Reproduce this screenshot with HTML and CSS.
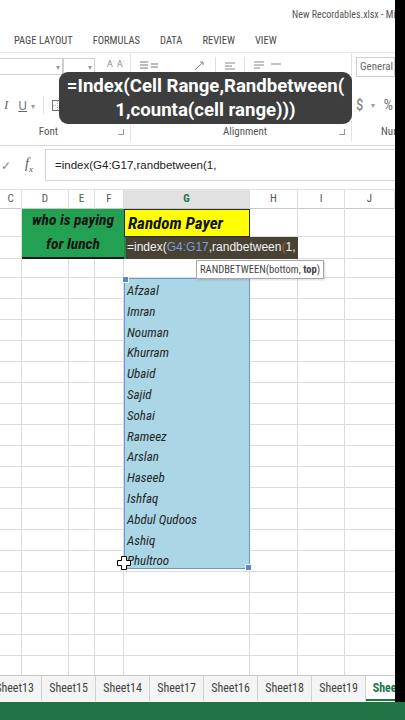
FILE: index.html
```html
<!DOCTYPE html>
<html lang="en">
<head>
    <meta charset="UTF-8">
    <meta name="viewport" content="width=device-width, initial-scale=1.0">
    <title>New Recordables.xlsx</title>
    <link rel="stylesheet" href="styles.css">
</head>
<body>
<div class="screen">
    <div class="main">
        <div class="app">
            <div class="titlebar">New Recordables.xlsx - Microsoft Excel</div>

            <div class="menu-tabs">
                <span>PAGE LAYOUT</span>
                <span>FORMULAS</span>
                <span>DATA</span>
                <span>REVIEW</span>
                <span>VIEW</span>
            </div>

            <!-- ribbon -->
            <div class="ribbon">
                <div class="group font-group">
                    <div class="ctl-row">
                        <span class="combo combo-name"><span class="caret">▾</span></span>
                        <span class="combo combo-size"><span class="caret">▾</span></span>
                        <span class="grow">A<small>˄</small> A<small>˅</small></span>
                    </div>
                    <div class="ctl-row row-low">
                        <span class="btn-i">I</span>
                        <span class="btn-u">U</span>
                        <span class="caret">▾</span>
                        <span class="vsep"></span>
                        <svg class="ico" width="11" height="11" viewBox="0 0 11 11"><rect x="0.5" y="0.5" width="10" height="10" fill="#fff" stroke="#777"/><path d="M5.5 1v9M1 5.5h9" stroke="#aaa" stroke-dasharray="1 1"/></svg>
                    </div>
                    <div class="glabel">Font<span class="launcher"></span></div>
                </div>

                <div class="group align-group">
                    <div class="ctl-row">
                        <svg class="ico" width="20" height="10" viewBox="0 0 20 10"><path d="M1 1h8M1 4h8M1 7h8M12 3h7M12 6h7" stroke="#777"/></svg>
                        <svg class="ico gap-l" width="14" height="12" viewBox="0 0 14 12"><path d="M2 10l8-8M7 2h3v3" stroke="#888" fill="none"/></svg>
                        <span class="vsep"></span>
                        <svg class="ico" width="12" height="10" viewBox="0 0 12 10"><path d="M1 2h10M1 5h7M1 8h10" stroke="#888"/></svg>
                        <span class="vsep"></span>
                        <svg class="ico" width="30" height="10" viewBox="0 0 30 10"><path d="M1 1h10M1 4h10M1 7h6M18 3h10" stroke="#888"/></svg>
                    </div>
                    <div class="ctl-row row-low"></div>
                    <div class="glabel">Alignment<span class="launcher"></span></div>
                </div>

                <div class="group num-group">
                    <div class="ctl-row">
                        <span class="combo combo-general">General</span>
                    </div>
                    <div class="ctl-row row-low num-btns">
                        <span>$</span>
                        <span class="caret">▾</span>
                        <span>%</span>
                    </div>
                    <div class="glabel">Number</div>
                </div>
            </div>

            <!-- formula bar -->
            <div class="fbar">
                <div class="fbar-icons">
                    <span class="tick">✓</span>
                    <span class="fx">f<sub>x</sub></span>
                </div>
                <div class="fbox">=index(G4:G17,randbetween(1,</div>
            </div>

            <!-- column headers -->
            <div class="colhead">
                <span>C</span>
                <span>D</span>
                <span>E</span>
                <span>F</span>
                <span class="active">G</span>
                <span>H</span>
                <span>I</span>
                <span>J</span>
            </div>

            <!-- worksheet body -->
            <div class="sheet">
                <div class="cell-title">
                    <span>who is paying</span>
                    <span>for lunch</span>
                </div>
                <div class="cell-payer">Random Payer</div>
                <div class="cell-edit">=index(<span class="ref">G4:G17</span>,randbetween<span class="paren">(</span>1,</div>

                <div class="selection">
                    <span>Afzaal</span>
                    <span>Imran</span>
                    <span>Nouman</span>
                    <span>Khurram</span>
                    <span>Ubaid</span>
                    <span>Sajid</span>
                    <span>Sohai</span>
                    <span>Rameez</span>
                    <span>Arslan</span>
                    <span>Haseeb</span>
                    <span>Ishfaq</span>
                    <span>Abdul Qudoos</span>
                    <span>Ashiq</span>
                    <span>Phultroo</span>
                </div>

                <div class="tooltip">RANDBETWEEN(bottom, <b>top</b>)</div>

                <svg class="cursor" width="14" height="14" viewBox="0 0 14 14">
                    <path d="M4.5 0.5h5v4h4v5h-4v4h-5v-4h-4v-5h4z" fill="#fff" stroke="#000"/>
                </svg>
            </div>

            <div class="sheet-tabs">
                <div class="tab-strip">
                    <span>Sheet13</span>
                    <span>Sheet15</span>
                    <span>Sheet14</span>
                    <span>Sheet17</span>
                    <span>Sheet16</span>
                    <span>Sheet18</span>
                    <span>Sheet19</span>
                    <span class="current">Sheet20</span>
                </div>
            </div>

            <!-- caption shown over the ribbon -->
            <div class="caption">
                =Index(Cell Range,Randbetween(<br>
                1,counta(cell range)))
            </div>
        </div>
        <div class="edge"></div>
    </div>
    <div class="statusbar"></div>
</div>
</body>
</html>
```

FILE: styles.css
```css
* {
    box-sizing: border-box;
}

body {
    margin: 0;
    background: #fff;
    font-family: "Open Sans", "Noto Sans", sans-serif;
    color: #444;
}

.screen {
    width: 405px;
    height: 720px;
    overflow: hidden;
    display: flex;
    flex-direction: column;
}

.main {
    display: flex;
    height: 702px;
}

.app {
    width: 395px;
    display: flex;
    flex-direction: column;
    position: relative;
    overflow: hidden;
}

.edge {
    width: 10px;
    background: #000;
}

.statusbar {
    height: 18px;
    background: #217346;
}

/* title + tabs */
.titlebar {
    height: 28px;
    padding-left: 292px;
    line-height: 29px;
    font-family: "Liberation Sans Narrow", "Roboto Condensed", Roboto, sans-serif;
    font-size: 10px;
    color: #555;
    white-space: nowrap;
    overflow: hidden;
}

.menu-tabs {
    height: 24px;
    display: flex;
    gap: 20px;
    padding-left: 14px;
    align-items: center;
    font-family: "Liberation Sans Narrow", "Roboto Condensed", Roboto, sans-serif;
    font-size: 10.5px;
    color: #4a4a4a;
}

/* ribbon */
.ribbon {
    height: 94px;
    display: flex;
    border-top: 1px solid #e6e6e6;
    border-bottom: 1px solid #d6d6d6;
    background: #fff;
}

.group {
    display: flex;
    flex-direction: column;
    flex: none;
    padding-top: 3px;
    border-right: 1px solid #e2e2e2;
    margin: 0 0 4px;
}

.font-group {
    width: 164px;
    margin-left: -33px;
}

.align-group {
    width: 221px;
    padding-left: 8px;
}

.num-group {
    flex: 1;
    min-width: 0;
    border-right: none;
    padding-left: 4px;
    overflow: hidden;
}

.ctl-row {
    height: 20px;
    display: flex;
    align-items: center;
    gap: 4px;
}

.row-low {
    margin-top: 18px;
    height: 22px;
}

.glabel {
    margin-top: auto;
    position: relative;
    text-align: center;
    font-family: "Liberation Sans Narrow", "Roboto Condensed", Roboto, sans-serif;
    font-size: 11px;
    color: #555;
    line-height: 18px;
}

.num-group .glabel {
    text-align: left;
    padding-left: 25px;
    white-space: nowrap;
}

.launcher {
    position: absolute;
    right: 6px;
    top: 6px;
    width: 6px;
    height: 6px;
    border-right: 1px solid #999;
    border-bottom: 1px solid #999;
}

.combo {
    position: relative;
    height: 17px;
    border: 1px solid #cfcfcf;
    background: #fff;
}

.combo-name {
    width: 96px;
}

.combo-size {
    width: 32px;
    margin-left: -4px;
}

.combo .caret {
    position: absolute;
    right: 2px;
    top: 2px;
}

.combo-general {
    width: 48px;
    height: 20px;
    margin-top: 2px;
    padding-left: 3px;
    font-family: "Liberation Sans Narrow", "Roboto Condensed", Roboto, sans-serif;
    font-size: 11px;
    line-height: 18px;
    color: #666;
}

.caret {
    font-size: 8px;
    color: #999;
}

.grow {
    margin-left: 8px;
    font-size: 9px;
    line-height: 10px;
    color: #888;
    align-self: flex-start;
    padding-top: 3px;
}

.grow small {
    font-size: 7px;
    vertical-align: top;
}

.btn-i {
    margin-left: 37px;
    font-family: "Liberation Serif", serif;
    font-style: italic;
    font-size: 13px;
    color: #666;
}

.btn-u {
    margin-left: 6px;
    font-size: 12px;
    text-decoration: underline;
    color: #666;
}

.vsep {
    width: 1px;
    height: 18px;
    background: #e0e0e0;
    margin: 0 4px;
}

.gap-l {
    margin-left: 30px;
}

.num-btns {
    font-family: "Liberation Sans Narrow", "Roboto Condensed", Roboto, sans-serif;
    font-size: 15px;
    color: #777;
    gap: 8px;
}

/* formula bar */
.fbar {
    height: 43px;
    display: flex;
    padding-top: 3px;
}

.fbar-icons {
    width: 45px;
    display: flex;
    align-items: center;
    height: 32px;
}

.tick {
    width: 20px;
    padding-left: 1px;
    font-size: 12px;
    color: #888;
}

.fx {
    font-family: "Liberation Serif", serif;
    font-style: italic;
    font-size: 14px;
    color: #555;
    padding-left: 5px;
}

.fx sub {
    font-size: 9px;
}

.fbox {
    flex: 1;
    height: 32px;
    border: 1px solid #d4d4d4;
    border-right: none;
    padding-left: 9px;
    line-height: 30px;
    font-family: "Liberation Sans", Arial, sans-serif;
    font-size: 11.5px;
    color: #222;
    white-space: nowrap;
}

/* columns */
.colhead,
.sheet {
    display: grid;
    grid-template-columns: 22px 47px 26px 29px 126px 48px 47px 50px;
}

.colhead {
    height: 20px;
    border-top: 1px solid #e0e0e0;
    border-bottom: 1px solid #c9c9c9;
    background: #fff;
}

.colhead span {
    border-right: 1px solid #dedede;
    text-align: center;
    font-family: "Liberation Sans Narrow", "Roboto Condensed", Roboto, sans-serif;
    font-size: 11px;
    line-height: 18px;
    color: #555;
}

.colhead .active {
    background: #e1e1e1;
    border-bottom: 2px solid #c6c6c6;
    color: #217346;
    font-weight: bold;
}

.sheet {
    position: relative;
    flex: 1;
    grid-template-rows: 28px 22px 19px repeat(14, 20.8px) 1fr;
    background:
        linear-gradient(#dcdcdc, #dcdcdc) 21px 0 / 1px 100% no-repeat,
        linear-gradient(#dcdcdc, #dcdcdc) 68px 0 / 1px 100% no-repeat,
        linear-gradient(#dcdcdc, #dcdcdc) 94px 0 / 1px 100% no-repeat,
        linear-gradient(#dcdcdc, #dcdcdc) 123px 0 / 1px 100% no-repeat,
        linear-gradient(#dcdcdc, #dcdcdc) 249px 0 / 1px 100% no-repeat,
        linear-gradient(#dcdcdc, #dcdcdc) 297px 0 / 1px 100% no-repeat,
        linear-gradient(#dcdcdc, #dcdcdc) 344px 0 / 1px 100% no-repeat,
        linear-gradient(#dcdcdc, #dcdcdc) 0 27px / 100% 1px no-repeat,
        linear-gradient(#dcdcdc, #dcdcdc) 0 49px / 100% 1px no-repeat,
        linear-gradient(#dcdcdc, #dcdcdc) 0 68px / 100% 1px no-repeat,
        repeating-linear-gradient(transparent 0 20px, #dcdcdc 20px 21px) 0 69px / 100% 100% no-repeat,
        #fff;
}

.cell-title {
    grid-column: 2 / 5;
    grid-row: 1 / 3;
    background: #22a152;
    border-bottom: 2px solid #1b1b1b;
    display: flex;
    flex-direction: column;
    align-items: center;
    justify-content: center;
    padding-bottom: 3px;
    font-family: "Liberation Sans Narrow", "Roboto Condensed", Lato, sans-serif;
    font-weight: bold;
    font-style: italic;
    font-size: 15.5px;
    line-height: 24px;
    color: #141414;
}

.cell-payer {
    grid-column: 5;
    grid-row: 1;
    background: #ffff00;
    border: 1px solid #2a2a2a;
    padding-left: 3px;
    font-family: "Liberation Sans Narrow", "Roboto Condensed", Lato, sans-serif;
    font-weight: bold;
    font-style: italic;
    font-size: 17px;
    line-height: 26px;
    color: #111;
}

.cell-edit {
    grid-column: 5 / 7;
    grid-row: 2;
    background: #474233;
    border-left: 2px solid #2f7d4a;
    padding-left: 1px;
    font-family: "Liberation Sans", Arial, sans-serif;
    font-size: 12px;
    line-height: 21px;
    color: #f2f2f2;
    white-space: nowrap;
}

.cell-edit .ref {
    color: #7f9cd6;
}

.cell-edit .paren {
    color: #b0603c;
}

.selection {
    grid-column: 5;
    grid-row: 4 / 18;
    position: relative;
    background: #abd6e6;
    border: 1px solid #6b96d6;
    display: flex;
    flex-direction: column;
}

.selection span {
    height: 20.8px;
    padding-top: 2px;
    line-height: 20px;
    padding-left: 2px;
    font-family: "Liberation Sans Narrow", "Roboto Condensed", Lato, sans-serif;
    font-style: italic;
    font-size: 13px;
    color: #262626;
}

.selection::before,
.selection::after {
    content: "";
    position: absolute;
    width: 5px;
    height: 5px;
    background: #5a86cc;
    border: 1px solid #fff;
}

.selection::before {
    left: -3px;
    top: -3px;
}

.selection::after {
    right: -3px;
    bottom: -3px;
}

.tooltip {
    position: absolute;
    left: 196px;
    top: 51px;
    height: 19px;
    padding: 0 3px;
    border: 1px solid #a7a7a7;
    background: #fff;
    font-family: "Liberation Sans Narrow", "Roboto Condensed", Roboto, sans-serif;
    font-size: 10.5px;
    line-height: 17px;
    color: #444;
    white-space: nowrap;
    box-shadow: 1px 1px 2px rgba(0, 0, 0, 0.15);
}

.cursor {
    position: absolute;
    left: 117px;
    top: 347px;
}

/* sheet tabs */
.sheet-tabs {
    height: 27px;
    border-top: 1px solid #c8c8c8;
    background: #f4f4f4;
    overflow: hidden;
}

.tab-strip {
    display: flex;
    margin-left: -12px;
}

.tab-strip span {
    flex: none;
    width: 54px;
    border-right: 1px solid #d2d2d2;
    text-align: center;
    font-family: "Liberation Sans Narrow", "Roboto Condensed", Roboto, sans-serif;
    font-size: 12px;
    line-height: 25px;
    color: #444;
}

.tab-strip .current {
    background: #fff;
    color: #217346;
    font-weight: bold;
    border-bottom: 2px solid #217346;
    height: 25px;
}

/* caption overlay */
.caption {
    position: absolute;
    left: 59px;
    top: 72px;
    width: 293px;
    height: 52px;
    border-radius: 9px;
    background: #3e3e3e;
    color: #fff;
    text-align: center;
    font-family: Roboto, "Noto Sans", sans-serif;
    font-weight: 700;
    font-size: 18.6px;
    line-height: 24px;
    padding-top: 2px;
    white-space: nowrap;
}
```
